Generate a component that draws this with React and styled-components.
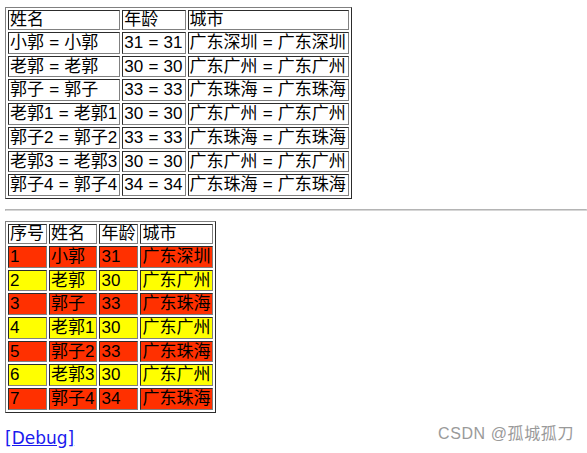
import React from "react";
import styled, { createGlobalStyle } from "styled-components";

const Global = createGlobalStyle`
  html, body { background: #fff; }
  body {
    margin: 7px 0 0 5px;
    font-family: "Liberation Sans", "Noto Sans CJK SC", sans-serif;
    font-size: 17px;
    color: #000;
  }
`;

const Page = styled.div`
  position: relative;
  height: 446px;
`;

const Table = styled.table`
  border: 1px outset #808080;
  border-spacing: 2px;
  border-collapse: separate;
  background: #fff;
`;

const Cell = styled.td`
  border: 1px inset #808080;
  padding: 0 2px 0 1px;
  line-height: ${(p) => (p.$head ? "18px" : "19.7px")};
  white-space: nowrap;
  word-spacing: 0.5px;
  text-align: left;
  vertical-align: middle;
  background: ${(p) => p.$bg || "#fff"};
`;

const Rule = styled.hr`
  margin: 10px 0 10px 0;
  border-style: solid;
  border-width: 1px;
  border-color: #b4b4b4 #d6d6d6 #d6d6d6 #b4b4b4;
  height: 0;
`;

const DebugLine = styled.div`
  margin-top: 14px;
  line-height: 22px;
`;

const DebugLink = styled.a`
  font-family: "DejaVu Sans", sans-serif;
  font-size: 17px;
  color: #1a1aee;
  text-decoration: underline;
`;

const Watermark = styled.div`
  position: absolute;
  left: 433px;
  top: 413px;
  font-family: "Liberation Sans", "Noto Sans CJK SC", sans-serif;
  font-size: 16px;
  letter-spacing: 0.6px;
  color: #9a9a9a;
  white-space: nowrap;
`;

const data = [
  ["小郭", "31", "广东深圳"],
  ["老郭", "30", "广东广州"],
  ["郭子", "33", "广东珠海"],
  ["老郭1", "30", "广东广州"],
  ["郭子2", "33", "广东珠海"],
  ["老郭3", "30", "广东广州"],
  ["郭子4", "34", "广东珠海"],
];

export default function App() {
  return (
    <>
      <Global />
      <Page>
        <Table>
          <tbody>
            <tr>
              <Cell $head>姓名</Cell>
              <Cell $head>年龄</Cell>
              <Cell $head>城市</Cell>
            </tr>
            {data.map((r, i) => (
              <tr key={i}>
                {r.map((v, j) => (
                  <Cell key={j}>{`${v} = ${v}`}</Cell>
                ))}
              </tr>
            ))}
          </tbody>
        </Table>
        <Rule />
        <Table>
          <tbody>
            <tr>
              <Cell $head>序号</Cell>
              <Cell $head>姓名</Cell>
              <Cell $head>年龄</Cell>
              <Cell $head>城市</Cell>
            </tr>
            {data.map((r, i) => {
              const bg = i % 2 === 0 ? "#ff3000" : "#ffff00";
              return (
                <tr key={i}>
                  <Cell $bg={bg}>{i + 1}</Cell>
                  {r.map((v, j) => (
                    <Cell key={j} $bg={bg}>
                      {v}
                    </Cell>
                  ))}
                </tr>
              );
            })}
          </tbody>
        </Table>
        <DebugLine>
          <DebugLink href="#">[Debug]</DebugLink>
        </DebugLine>
        <Watermark>CSDN @孤城孤刀</Watermark>
      </Page>
    </>
  );
}
